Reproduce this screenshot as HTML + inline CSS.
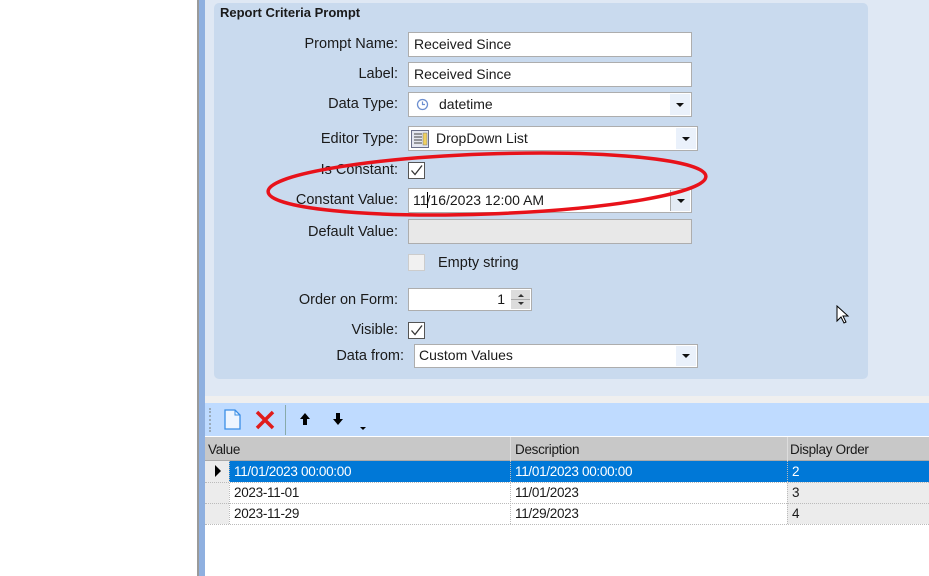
<!DOCTYPE html>
<html><head><style>
*{margin:0;padding:0;box-sizing:border-box}
body{width:929px;height:576px;overflow:hidden;background:#fff;font-family:"Liberation Sans",sans-serif;font-size:14px;color:#1a1a1a;position:relative}
.a{position:absolute}
.lbl{position:absolute;right:531px;text-align:right;white-space:nowrap;font-size:14.5px}
.box{position:absolute;background:#fff;border:1px solid #adadad;padding-left:5px;line-height:22px;white-space:nowrap}
.dd{position:absolute;top:1px;right:1px;bottom:1px;width:20px;background:#eaf1fb}
.dd:after{content:"";position:absolute;left:6px;top:50%;margin-top:-2px;border-left:4px solid transparent;border-right:4px solid transparent;border-top:4px solid #111}
.cb{position:absolute;width:17px;height:17px;border:1px solid #555;background:#fff}
.cell{position:absolute;line-height:21px;font-size:13.5px;padding-left:5px;white-space:nowrap;letter-spacing:-0.3px}
</style></head><body>
<div class="a" style="left:197px;top:0;width:2px;height:576px;background:#9a9a9a"></div>
<div class="a" style="left:199px;top:0;width:6px;height:576px;background:#8fb0e0"></div>
<div class="a" style="left:205px;top:0;width:724px;height:396px;background:#dfe8f4"></div>
<div class="a" style="left:205px;top:396px;width:724px;height:7px;background:#efefef"></div>
<div class="a" style="left:214px;top:3px;width:654px;height:376px;background:#c9daee;border-radius:5px"></div>
<div class="a" style="left:220px;top:5px;font-weight:bold;font-size:13px">Report Criteria Prompt</div>

<div class="lbl" style="top:36px">Prompt Name:</div>
<div class="box" style="left:408px;top:32px;width:284px;height:25px">Received Since</div>
<div class="lbl" style="top:66px">Label:</div>
<div class="box" style="left:408px;top:62px;width:284px;height:25px">Received Since</div>
<div class="lbl" style="top:96px">Data Type:</div>
<div class="box" style="left:408px;top:92px;width:284px;height:25px;padding-left:30px">datetime
<svg class="a" style="left:7px;top:5px" width="13" height="13"><circle cx="6.5" cy="6.5" r="5" fill="none" stroke="#6d8fd0" stroke-width="1.3"/><path d="M6.5 3.5V6.5H9" fill="none" stroke="#6d8fd0" stroke-width="1.2"/></svg><div class="dd"></div></div>
<div class="lbl" style="top:131px">Editor Type:</div>
<div class="box" style="left:408px;top:126px;width:290px;height:25px;padding-left:27px">DropDown List
<svg class="a" style="left:2px;top:3px" width="18" height="18"><rect x="0.5" y="0.5" width="17" height="17" fill="#e4e6f0" stroke="#6a6f8a"/><path d="M3 4h8M3 7h8M3 10h8M3 13h8" stroke="#444"/><rect x="12" y="3" width="4" height="12" fill="#f0d060" stroke="#777" stroke-width=".5"/></svg><div class="dd"></div></div>
<div class="lbl" style="top:162px">Is Constant:</div>
<div class="cb" style="left:408px;top:162px"><svg width="15" height="15"><path d="M2.5 7.5l3.5 4 7-9" fill="none" stroke="#333" stroke-width="1.3"/></svg></div>
<div class="lbl" style="top:192px">Constant Value:</div>
<div class="box" style="left:408px;top:188px;width:284px;height:25px;padding-left:4px">11<span style="border-left:1px solid #000;margin:0 -1px"></span>/16/2023 12:00 AM<div class="dd" style="background:#e4ebf5;border-left:1px solid #aaa"></div></div>
<div class="lbl" style="top:224px">Default Value:</div>
<div class="box" style="left:408px;top:219px;width:284px;height:25px;background:#e8e8e8"></div>
<div class="cb" style="left:408px;top:254px;border-color:#ccc;background:#f1f1f1"></div>
<div class="a" style="left:438px;top:255px;font-size:14.5px">Empty string</div>
<div class="lbl" style="top:292px">Order on Form:</div>
<div class="box" style="left:408px;top:288px;width:124px;height:23px;line-height:21px;text-align:right;padding-right:26px">1
<div class="a" style="right:1px;top:1px;width:19px;height:19px;background:#dcdcdc"><div class="a" style="left:0;top:9px;width:19px;height:1px;background:#aaa"></div><div class="a" style="left:7px;top:4px;border-left:3px solid transparent;border-right:3px solid transparent;border-bottom:3px solid #333"></div><div class="a" style="left:7px;top:12px;border-left:3px solid transparent;border-right:3px solid transparent;border-top:3px solid #333"></div></div></div>
<div class="lbl" style="top:322px">Visible:</div>
<div class="cb" style="left:408px;top:322px"><svg width="15" height="15"><path d="M2.5 7.5l3.5 4 7-9" fill="none" stroke="#333" stroke-width="1.3"/></svg></div>
<div class="lbl" style="top:348px;right:525px">Data from:</div>
<div class="box" style="left:414px;top:344px;width:284px;height:24px;line-height:21px;padding-left:4px">Custom Values<div class="dd"></div></div>

<svg class="a" style="left:0;top:0" width="929" height="576"><ellipse cx="487" cy="184" rx="219" ry="30" transform="rotate(-2 487 184)" fill="none" stroke="#e8121a" stroke-width="3.5"/></svg>
<svg class="a" style="left:836px;top:305px" width="14" height="20"><path d="M1 1v15l4-4 3 6 2-1-3-6h5z" fill="#fff" stroke="#000"/></svg>

<div class="a" style="left:205px;top:403px;width:724px;height:33px;background:#bfdbff"></div>
<div class="a" style="left:209px;top:408px;width:2px;height:24px;border-left:2px dotted #9ab"></div>
<svg class="a" style="left:224px;top:409px" width="18" height="21"><path d="M1 1h10l5 5v14H1z" fill="#eef5ff" stroke="#3a8ee6" stroke-width="1.3"/><path d="M11 1v5h5" fill="none" stroke="#3a8ee6"/></svg>
<svg class="a" style="left:254px;top:410px" width="22" height="20"><path d="M3 2l16 16M19 2L3 18" stroke="#e01b1b" stroke-width="3.5"/></svg>
<div class="a" style="left:285px;top:405px;width:1px;height:30px;background:#8aa"></div>
<svg class="a" style="left:298px;top:412px" width="14" height="14"><path d="M7 1l5 6H9v6H5V7H2z" fill="#000"/></svg>
<svg class="a" style="left:331px;top:412px" width="14" height="14"><path d="M7 13l5-6H9V1H5v6H2z" fill="#000"/></svg>
<div class="a" style="left:360px;top:427px;border-left:3px solid transparent;border-right:3px solid transparent;border-top:3px solid #000"></div>

<div class="a" style="left:205px;top:437px;width:724px;height:24px;background:#c8c8c8;border-bottom:1px solid #aaa"></div>
<div class="cell" style="left:203px;top:439px">Value</div>
<div class="a" style="left:510px;top:437px;width:1px;height:24px;background:#ddd"></div>
<div class="cell" style="left:510px;top:439px">Description</div>
<div class="a" style="left:787px;top:437px;width:1px;height:24px;background:#ddd"></div>
<div class="cell" style="left:785px;top:439px">Display Order</div>

<div class="a" style="left:205px;top:461px;width:24px;height:63px;background:#ececec"></div>
<div class="a" style="left:215px;top:465px;border-top:6px solid transparent;border-bottom:6px solid transparent;border-left:6px solid #000"></div>
<div class="a" style="left:229px;top:461px;width:700px;height:21px;background:#0078d7"></div>
<div class="a" style="left:229px;top:482px;width:558px;height:42px;background:#fff"></div>
<div class="a" style="left:787px;top:482px;width:142px;height:42px;background:#ececec"></div>
<div class="a" style="left:205px;top:482px;width:724px;border-top:1px dotted #bbb"></div>
<div class="a" style="left:205px;top:503px;width:724px;border-top:1px dotted #bbb"></div>
<div class="a" style="left:205px;top:524px;width:724px;border-top:1px dotted #bbb"></div>
<div class="a" style="left:229px;top:461px;height:63px;border-left:1px dotted #bbb"></div>
<div class="a" style="left:510px;top:461px;height:63px;border-left:1px dotted #bbb"></div>
<div class="a" style="left:787px;top:461px;height:63px;border-left:1px dotted #bbb"></div>
<div class="cell" style="left:229px;top:461px;color:#fff">11/01/2023 00:00:00</div>
<div class="cell" style="left:510px;top:461px;color:#fff">11/01/2023 00:00:00</div>
<div class="cell" style="left:787px;top:461px;color:#fff">2</div>
<div class="cell" style="left:229px;top:482px">2023-11-01</div>
<div class="cell" style="left:510px;top:482px">11/01/2023</div>
<div class="cell" style="left:787px;top:482px">3</div>
<div class="cell" style="left:229px;top:503px">2023-11-29</div>
<div class="cell" style="left:510px;top:503px">11/29/2023</div>
<div class="cell" style="left:787px;top:503px">4</div>
</body></html>
